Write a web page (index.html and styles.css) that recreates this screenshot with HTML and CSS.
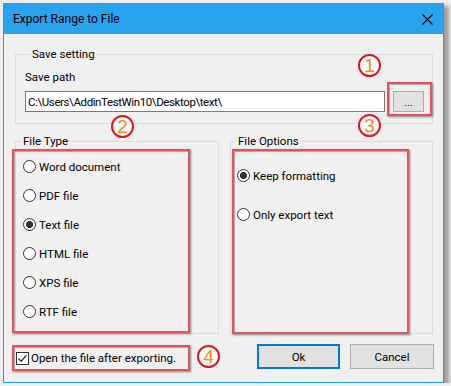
FILE: index.html
```html
<!DOCTYPE html>
<html lang="en">
<head>
  <meta charset="UTF-8">
  <meta name="viewport" content="width=device-width, initial-scale=1.0">
  <title>Export Range to File</title>
  <link rel="stylesheet" href="styles.css">
</head>
<body>
  <div class="window">
    <!-- Title bar -->
    <div class="titlebar">
      <span class="title">Export Range to File</span>
      <svg class="close" width="11" height="11" viewBox="0 0 11 11">
        <path d="M0.5 0.5 L10.5 10.5 M10.5 0.5 L0.5 10.5" stroke="#000" stroke-width="1.1" fill="none"/>
      </svg>
    </div>

    <div class="dialog">
      <!-- Save setting -->
      <fieldset class="group save-group">
        <legend>Save setting</legend>
        <div class="field-label">Save path</div>
        <div class="path-row">
          <input class="path-input" type="text" value="C:\Users\AddinTestWin10\Desktop\text\">
          <span class="mark mark-browse"><button class="btn browse">...</button></span>
        </div>
      </fieldset>

      <!-- File type / options -->
      <div class="options">
        <fieldset class="group">
          <legend>File Type</legend>
          <div class="mark mark-types">
            <label class="radio"><span class="dot"></span>Word document</label>
            <label class="radio"><span class="dot"></span>PDF file</label>
            <label class="radio"><span class="dot on"></span>Text file</label>
            <label class="radio"><span class="dot"></span>HTML file</label>
            <label class="radio"><span class="dot"></span>XPS file</label>
            <label class="radio"><span class="dot"></span>RTF file</label>
          </div>
        </fieldset>
        <fieldset class="group">
          <legend>File Options</legend>
          <div class="mark mark-opts">
            <label class="radio"><span class="dot on"></span>Keep formatting</label>
            <label class="radio"><span class="dot"></span>Only export text</label>
          </div>
        </fieldset>
      </div>

      <!-- Footer -->
      <div class="footer">
        <label class="mark mark-open">
          <span class="check">
            <svg width="11" height="11" viewBox="0 0 11 11">
              <path d="M1.5 5.5 L4.2 8.3 L9.5 2.2" stroke="#333" stroke-width="1.3" fill="none"/>
            </svg>
          </span>Open the file after exporting.
        </label>
        <div class="buttons">
          <button class="btn ok">Ok</button>
          <button class="btn cancel">Cancel</button>
        </div>
      </div>
    </div>

    <!-- Annotation numbers -->
    <span class="num n1">1</span>
    <span class="num n2">2</span>
    <span class="num n3">3</span>
    <span class="num n4">4</span>
  </div>
</body>
</html>
```

FILE: styles.css
```css
body {
  margin: 0;
  background-color: #efefef;
  font-family: Roboto, "Liberation Sans", sans-serif;
  font-size: 11.5px;
  color: #000;
}
.window {
  position: relative;
  box-sizing: border-box;
  width: 441px;
  margin: 3px 0 0 3px;
  border: 1px solid #22a0ee;
  background-color: #f0f0f0;
  box-shadow: 4px 4px 4px 1px rgba(0, 0, 0, 0.35);
}
.titlebar {
  display: flex;
  align-items: center;
  justify-content: space-between;
  height: 30px;
  padding: 0 10px 0 9px;
  margin-top: -1px;
  border-top: 1px solid #22a0ee;
  background-color: #2aa3ef;
}
.title {
  font-size: 12px;
}
.dialog {
  padding: 12px 10px 11px 11px;
}
.group {
  margin: 0;
  padding: 0;
  min-width: 0;
  border: 1px solid #dcdcdc;
}
.group legend {
  margin-left: 6px;
  padding: 0 1px;
  line-height: 16px;
}
.save-group {
  padding: 7px 8px 11px 9px;
}
.field-label {
  line-height: 16px;
}
.path-row {
  display: flex;
  align-items: flex-start;
  margin-top: 6px;
}
.path-input {
  box-sizing: border-box;
  width: 360px;
  height: 21px;
  margin: 0 8px 0 0;
  padding: 0 2px;
  border: 1px solid #7a7a7a;
  background: #fff;
  font-family: Roboto, "Liberation Sans", sans-serif;
  font-size: 11.5px;
  letter-spacing: -0.4px;
  color: #000;
  outline: none;
}
.btn {
  box-sizing: border-box;
  margin: 0;
  padding: 0;
  border: 1px solid #adadad;
  background-color: #e1e1e1;
  font-family: Roboto, "Liberation Sans", sans-serif;
  font-size: 11.5px;
  color: #000;
}
.browse {
  width: 31px;
  height: 21px;
  color: #1a1a6e;
}

/* red annotation frames */
.mark {
  box-sizing: border-box;
  border: 2px solid #e8505e;
  box-shadow: 1px 1px 2px rgba(0, 0, 0, 0.45), inset 1px 1px 1px rgba(0, 0, 0, 0.3);
}
.mark-browse {
  display: flex;
  padding: 7px 6px 2px 4px;
  margin: -9px -8px -4px -6px;
}
.options {
  display: grid;
  grid-template-columns: 204px 1fr;
  column-gap: 11px;
  margin-top: 9px;
}
.mark-types {
  width: 178px;
  height: 184px;
  margin-left: -4px;
  padding-top: 1px;
}
.mark-opts {
  display: flex;
  flex-direction: column;
  gap: 10px;
  width: 177px;
  height: 185px;
  margin: 0 0 -1px 1px;
  padding: 10px 0 0 3px;
}
.radio {
  display: flex;
  align-items: center;
  height: 29px;
}
.mark-types .radio {
  padding-left: 9px;
}
.dot {
  box-sizing: border-box;
  width: 13px;
  height: 13px;
  margin-right: 3px;
  border: 1px solid #333;
  border-radius: 50%;
  background: #fff;
}
.dot.on {
  background: radial-gradient(circle, #333 3.3px, #fff 3.8px);
}
.footer {
  display: flex;
  align-items: flex-start;
  justify-content: space-between;
  margin-top: 10px;
}
.mark-open {
  display: flex;
  align-items: center;
  width: 178px;
  height: 26px;
  margin: 1px 0 0 -3px;
}
.check {
  box-sizing: border-box;
  display: flex;
  align-items: center;
  justify-content: center;
  width: 13px;
  height: 13px;
  margin: 0 2px 0 2px;
  border: 1px solid #333;
  background: #fff;
}
.buttons {
  display: flex;
  gap: 10px;
  margin-right: -1px;
}
.ok {
  width: 83px;
  height: 25px;
  border: 2px solid #0078d7;
}
.cancel {
  width: 84px;
  height: 25px;
}

/* circled numbers */
.num {
  position: absolute;
  box-sizing: border-box;
  width: 23px;
  height: 23px;
  border: 2px solid #e6121e;
  border-radius: 50%;
  background: #fff;
  color: #f68b1f;
  font-family: "Liberation Sans", sans-serif;
  font-size: 19px;
  line-height: 20px;
  text-align: center;
}
.n1 { left: 354px; top: 50px; }
.n2 { left: 107px; top: 111px; }
.n3 { left: 354px; top: 110px; }
.n4 { left: 193px; top: 341px; }
```
